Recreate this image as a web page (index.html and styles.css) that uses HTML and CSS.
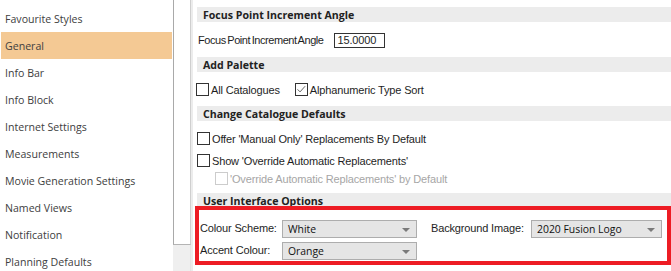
FILE: index.html
```html
<!DOCTYPE html>
<html>
<head>
<meta charset="utf-8">
<link rel="stylesheet" href="styles.css">
</head>
<body>
<div class="app">
  <nav class="sidebar">
    <div class="nav-item">Favourite Styles</div>
    <div class="nav-item active">General</div>
    <div class="nav-item">Info Bar</div>
    <div class="nav-item">Info Block</div>
    <div class="nav-item">Internet Settings</div>
    <div class="nav-item">Measurements</div>
    <div class="nav-item">Movie Generation Settings</div>
    <div class="nav-item">Named Views</div>
    <div class="nav-item">Notification</div>
    <div class="nav-item">Planning Defaults</div>
  </nav>
  <div class="gutter">
    <div class="gutter-top"></div>
    <div class="gutter-bottom"></div>
  </div>
  <main class="content">
    <div class="section-head">Focus Point Increment Angle</div>
    <div class="row row-angle">
      <span class="label tight">Focus Point Increment Angle</span>
      <span class="textbox">15.0000</span>
    </div>

    <div class="section-head">Add Palette</div>
    <div class="row row-palette">
      <span class="check"></span><span class="label">All Catalogues</span>
      <span class="check checked second"><svg viewBox="0 0 13 13" width="11" height="11"><path d="M1.8 6.3 L4.8 9.3 L10.8 2.6" fill="none" stroke="#333" stroke-width="0.9"/></svg></span><span class="label">Alphanumeric Type Sort</span>
    </div>

    <div class="section-head">Change Catalogue Defaults</div>
    <div class="row row-opt1">
      <span class="check"></span><span class="label">Offer 'Manual Only' Replacements By Default</span>
    </div>
    <div class="row row-opt2">
      <span class="check"></span><span class="label">Show 'Override Automatic Replacements'</span>
    </div>
    <div class="row row-opt3">
      <span class="check disabled"></span><span class="label muted">'Override Automatic Replacements' by Default</span>
    </div>

    <div class="section-head">User Interface Options</div>
    <div class="highlight">
      <div class="ui-grid">
        <span class="ui-label">Colour Scheme:</span>
        <div class="select">White</div>
        <span class="ui-label second-col">Background Image:</span>
        <div class="select">2020 Fusion Logo</div>
        <span class="ui-label">Accent Colour:</span>
        <div class="select">Orange</div>
      </div>
    </div>
  </main>
</div>
</body>
</html>
```
FILE: styles.css
```css
html, body {
  margin: 0;
  padding: 0;
  background: #ffffff;
}
body {
  width: 671px;
  height: 271px;
  overflow: hidden;
}
.app {
  display: flex;
  height: 271px;
}

/* Sidebar */
.sidebar {
  width: 173px;
  flex: none;
  padding-top: 5px;
  box-sizing: border-box;
  font-family: "Open Sans", sans-serif;
  font-size: 10.6px;
  color: #404040;
}
.nav-item {
  height: 27px;
  line-height: 28px;
  margin: 0 1px;
  padding-left: 4px;
  white-space: nowrap;
}
.nav-item.active {
  background: #f4c994;
}

/* Gutter between list and panel */
.gutter {
  width: 18px;
  flex: none;
  display: flex;
  flex-direction: column;
}
.gutter-top {
  flex: 1;
  border-left: 1px solid #a9a9a9;
  border-right: 1px solid #cfcfcf;
  border-bottom: 1px solid #b4b4b4;
  background: #fff;
}
.gutter-bottom {
  height: 26px;
  background: #efefef;
  border-right: 1px solid #e4e4e4;
}

/* Content */
.content {
  flex: 1;
  padding-top: 7px;
  padding-left: 2px;
  box-sizing: border-box;
  font-family: "Liberation Sans", Arial, sans-serif;
  font-size: 11px;
  letter-spacing: -0.15px;
  color: #1e1e1e;
  border-left: 2px solid #ececec;
}
.section-head {
  margin-left: 2px;
  height: 15px;
  line-height: 16px;
  padding-left: 6px;
  background: #ececec;
  font-family: "Open Sans", sans-serif;
  font-weight: bold;
  font-size: 10.6px;
  letter-spacing: 0;
  color: #222;
  white-space: nowrap;
  overflow: hidden;
}
.row {
  display: flex;
  align-items: center;
  padding-left: 2px;
  white-space: nowrap;
}
.row-angle {
  height: 35px;
  padding-top: 1px;
  box-sizing: border-box;
  padding-left: 3px;
}
.tight {
  word-spacing: -1px;
  letter-spacing: -0.45px;
}
.textbox {
  margin-left: 11px;
  width: 51px;
  height: 15px;
  box-sizing: border-box;
  border: 1px solid #333;
  line-height: 13px;
  padding-left: 2px;
  font-size: 11px;
}
.row-palette {
  height: 34px;
  padding-top: 1px;
  box-sizing: border-box;
  padding-left: 1px;
}
.check {
  width: 13px;
  height: 13px;
  box-sizing: border-box;
  border: 1px solid #333;
  background: #fff;
  flex: none;
  margin-right: 2px;
  display: inline-flex;
  align-items: center;
  justify-content: center;
}
.check.second {
  margin-left: 15px;
}
.check.disabled {
  border-color: #cccccc;
}
.label.muted {
  color: #a6a6a6;
}
.row-opt1 {
  margin-top: 11px;
  height: 13px;
}
.row-opt2 {
  margin-top: 9px;
  height: 13px;
}
.row-opt3 {
  margin-top: 5px;
  height: 13px;
  padding-left: 20px;
}
.row-opt3 + .section-head {
  margin-top: 8px;
}

/* Highlighted (annotation) box */
.highlight {
  margin-top: -2px;
  position: relative;
  border: 4px solid #ed1c24;
  height: 59px;
  box-sizing: border-box;
}
.ui-grid {
  display: grid;
  grid-template-columns: 83px 135px 114px 131px;
  row-gap: 4px;
  padding-top: 10px;
}
.ui-label {
  line-height: 14px;
  padding-top: 1px;
  padding-left: 1px;
  white-space: nowrap;
}
.ui-label.second-col {
  padding-left: 14px;
}
.select {
  position: relative;
  height: 18px;
  box-sizing: border-box;
  border: 1px solid #adadad;
  background: #e5e5e5;
  font-family: "Open Sans", sans-serif;
  font-size: 10.4px;
  letter-spacing: 0;
  line-height: 17px;
  padding-left: 5px;
  color: #111;
  white-space: nowrap;
}
.select::after {
  content: "";
  position: absolute;
  right: 6px;
  top: 7px;
  border-left: 4px solid transparent;
  border-right: 4px solid transparent;
  border-top: 4px solid #7a7a7a;
}
```
